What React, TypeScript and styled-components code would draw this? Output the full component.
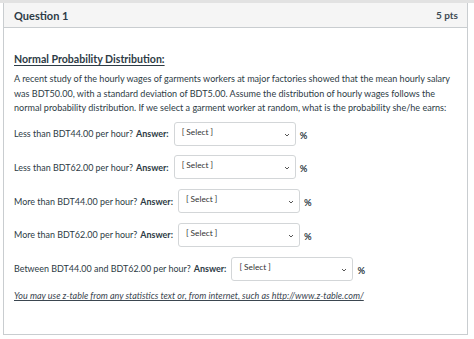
import React from "react";
import styled, { createGlobalStyle } from "styled-components";

const Global = createGlobalStyle`
  html, body { margin: 0; padding: 0; background: #fff; }
  body { font-family: Lato, "Open Sans", sans-serif; color: #2d3b45; }
`;

const Page = styled.div`
  width: 474px;
  height: 339px;
  box-sizing: border-box;
  border-top: 3px solid #e2e2e2;
  padding-left: 3px;
  overflow: hidden;
`;

const Card = styled.div`
  width: 465px;
  height: 332px;
  box-sizing: border-box;
  border: 1px solid #c9cdd0;
  border-top: none;
  display: flex;
  flex-direction: column;
`;

const Header = styled.div`
  height: 25px;
  box-sizing: border-box;
  background: #f5f5f5;
  border-bottom: 1px solid #c9cdd0;
  display: flex;
  align-items: center;
  justify-content: space-between;
  padding: 0 9px 0 10px;
`;

const QTitle = styled.div`
  font-weight: 700;
  font-size: 11px;
`;

const Pts = styled.div`
  font-weight: 700;
  font-size: 10px;
  color: #3d4a54;
`;

const Body = styled.div`
  padding: 25px 10px 0 10px;
  display: flex;
  flex-direction: column;
`;

const Heading = styled.div`
  font-weight: 700;
  font-size: 10.6px;
  text-decoration: underline;
  text-underline-offset: 2px;
  margin-bottom: 7px;
`;

const Para = styled.p`
  margin: 0 0 6px 0;
  font-size: 9.05px;
  line-height: 14.5px;
`;

const Row = styled.div`
  display: flex;
  align-items: center;
  height: 24px;
  margin-bottom: 9.8px;
  font-size: 8.95px;
`;

const Bold = styled.b`
  font-weight: 700;
  margin-left: 3px;
`;

const Select = styled.div`
  margin-left: 5px;
  width: 122px;
  height: 24px;
  box-sizing: border-box;
  border: 1px solid #d3d6d8;
  border-radius: 3px;
  background: #fff;
  display: flex;
  align-items: flex-start;
  justify-content: space-between;
  padding: 4px 5px 0 7px;
  font-size: 8.3px;
  color: #333;
`;

const Chevron = styled.svg`
  width: 6px;
  height: 6px;
  margin-top: 5px;
`;

const Percent = styled.span`
  margin-left: 4px;
  font-weight: 700;
  font-size: 9.3px;
  padding-top: 3px;
`;

const Note = styled.div`
  font-size: 9px;
  font-style: italic;
  text-decoration: underline;
  color: #3b4650;
`;

const rows = [
  "Less than BDT44.00 per hour?",
  "Less than BDT62.00 per hour?",
  "More than BDT44.00 per hour?",
  "More than BDT62.00 per hour?",
  "Between BDT44.00 and BDT62.00 per hour?",
];

export default function App() {
  return (
    <>
      <Global />
      <Page>
        <Card>
          <Header>
            <QTitle>Question 1</QTitle>
            <Pts>5 pts</Pts>
          </Header>
          <Body>
            <Heading>Normal Probability Distribution:</Heading>
            <Para>
              A recent study of the hourly wages of garments workers at major factories showed that the mean hourly salary
              was BDT50.00, with a standard deviation of BDT5.00. Assume the distribution of hourly wages follows the
              normal probability distribution. If we select a garment worker at random, what is the probability she/he earns:
            </Para>
            {rows.map((r) => (
              <Row key={r}>
                <span>{r}</span>
                <Bold>Answer:</Bold>
                <Select>
                  <span>[ Select ]</span>
                  <Chevron viewBox="0 0 6 6">
                    <path d="M1 2 L3 4 L5 2" fill="none" stroke="#555" strokeWidth="1" />
                  </Chevron>
                </Select>
                <Percent>%</Percent>
              </Row>
            ))}
            <Note>You may use z-table from any statistics text or, from internet, such as http://www.z-table.com/</Note>
          </Body>
        </Card>
      </Page>
    </>
  );
}
